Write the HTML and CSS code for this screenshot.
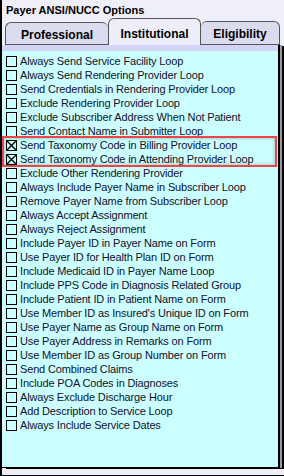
FILE: index.html
```html
<!DOCTYPE html>
<html lang="en">
<head>
  <meta charset="UTF-8">
  <title>Payer ANSI/NUCC Options</title>
  <link rel="stylesheet" href="styles.css">
</head>
<body>

  <div class="okno">
    <div class="tytul">Payer ANSI/NUCC Options</div>

    <div class="zakladki">
      <div class="zakladka prof">Professional</div>
      <div class="zakladka inst aktywna">Institutional</div>
      <div class="zakladka elig">Eligibility</div>
    </div>

    <div class="panel">
      <div class="pasek"></div>
      <div class="lista">
        <div class="wiersz"><span class="pole"></span>Always Send Service Facility Loop</div>
        <div class="wiersz"><span class="pole"></span>Always Send Rendering Provider Loop</div>
        <div class="wiersz"><span class="pole"></span>Send Credentials in Rendering Provider Loop</div>
        <div class="wiersz"><span class="pole"></span>Exclude Rendering Provider Loop</div>
        <div class="wiersz"><span class="pole"></span>Exclude Subscriber Address When Not Patient</div>
        <div class="wiersz"><span class="pole"></span>Send Contact Name in Submitter Loop</div>
        <div class="grupa">
          <div class="wiersz"><span class="pole"><svg width="11" height="11" viewBox="0 0 11 11"><path d="M1 1L10 10M10 1L1 10" stroke="#000" stroke-width="1.4"/></svg></span>Send Taxonomy Code in Billing Provider Loop</div>
          <div class="wiersz"><span class="pole"><svg width="11" height="11" viewBox="0 0 11 11"><path d="M1 1L10 10M10 1L1 10" stroke="#000" stroke-width="1.4"/></svg></span>Send Taxonomy Code in Attending Provider Loop</div>
        </div>
        <div class="wiersz"><span class="pole"></span>Exclude Other Rendering Provider</div>
        <div class="wiersz"><span class="pole"></span>Always Include Payer Name in Subscriber Loop</div>
        <div class="wiersz"><span class="pole"></span>Remove Payer Name from Subscriber Loop</div>
        <div class="wiersz"><span class="pole"></span>Always Accept Assignment</div>
        <div class="wiersz"><span class="pole"></span>Always Reject Assignment</div>
        <div class="wiersz"><span class="pole"></span>Include Payer ID in Payer Name on Form</div>
        <div class="wiersz"><span class="pole"></span>Use Payer ID for Health Plan ID on Form</div>
        <div class="wiersz"><span class="pole"></span>Include Medicaid ID in Payer Name Loop</div>
        <div class="wiersz"><span class="pole"></span>Include PPS Code in Diagnosis Related Group</div>
        <div class="wiersz"><span class="pole"></span>Include Patient ID in Patient Name on Form</div>
        <div class="wiersz"><span class="pole"></span>Use Member ID as Insured's Unique ID on Form</div>
        <div class="wiersz"><span class="pole"></span>Use Payer Name as Group Name on Form</div>
        <div class="wiersz"><span class="pole"></span>Use Payer Address in Remarks on Form</div>
        <div class="wiersz"><span class="pole"></span>Use Member ID as Group Number on Form</div>
        <div class="wiersz"><span class="pole"></span>Send Combined Claims</div>
        <div class="wiersz"><span class="pole"></span>Include POA Codes in Diagnoses</div>
        <div class="wiersz"><span class="pole"></span>Always Exclude Discharge Hour</div>
        <div class="wiersz"><span class="pole"></span>Add Description to Service Loop</div>
        <div class="wiersz"><span class="pole"></span>Always Include Service Dates</div>
      </div>
    </div>
  </div>

</body>
</html>
```

FILE: styles.css
```css
body {
  margin: 0;
  background: #efeff9;
  font-family: 'Liberation Sans', Arial, sans-serif;
  color: #10102e;
}

.okno {
  width: 284px;
  height: 476px;
  box-sizing: border-box;
  border-left: 2px solid #000;
  border-bottom: 1px solid #000;
  display: flex;
  flex-direction: column;
  overflow: hidden;
}

.tytul {
  height: 18px;
  box-sizing: border-box;
  padding: 3px 0 0 4px;
  font-size: 11px;
  font-weight: bold;
  line-height: 14px;
  color: #000;
}

.zakladki {
  height: 27px;
  display: flex;
  align-items: flex-end;
  padding-left: 3px;
}

.zakladka {
  box-sizing: border-box;
  height: 24px;
  border: 1px solid #555;
  border-radius: 6px 6px 0 0;
  background: #dcdcf0;
  font-size: 12px;
  font-weight: bold;
  color: #000;
  display: flex;
  align-items: center;
  justify-content: center;
  padding-top: 2px;
}

.prof {
  width: 103px;
  height: 23px;
  border-right: none;
  padding-top: 3px;
}

.inst {
  width: 93px;
}

.elig {
  width: 79px;
  border-left: none;
}

.aktywna {
  height: 27px;
  background: #eeeefa;
  border-bottom: none;
  padding-top: 4px;
}

.panel {
  flex: 1;
  margin: 0 4px 7px 0;
  border-right: 2px solid #000;
  border-bottom: 1px solid #000;
  box-shadow: 2px 0 0 #9a9a9a, 4px 1px 0 #000;
  display: flex;
  flex-direction: column;
}

.pasek {
  height: 6px;
  background: #d4d4f6;
}

.lista {
  flex: 1;
  background: #ccffff;
  padding-top: 3px;
}

.wiersz {
  height: 14px;
  display: flex;
  align-items: center;
  padding-left: 4px;
  font-size: 11px;
  letter-spacing: -0.15px;
  line-height: 14px;
  white-space: nowrap;
}

.pole {
  width: 11px;
  height: 11px;
  box-sizing: border-box;
  border: 1px solid #000;
  margin-right: 3px;
  flex-shrink: 0;
  position: relative;
}

.pole svg {
  position: absolute;
  left: -1px;
  top: -1px;
}

.grupa {
  position: relative;
}

.grupa::after {
  content: "";
  position: absolute;
  top: -2px;
  bottom: -1px;
  left: 0;
  right: 1px;
  border: 2px solid #ee4646;
  box-shadow: inset 0 0 3px 1px rgba(0, 0, 0, 0.18);
}
```
